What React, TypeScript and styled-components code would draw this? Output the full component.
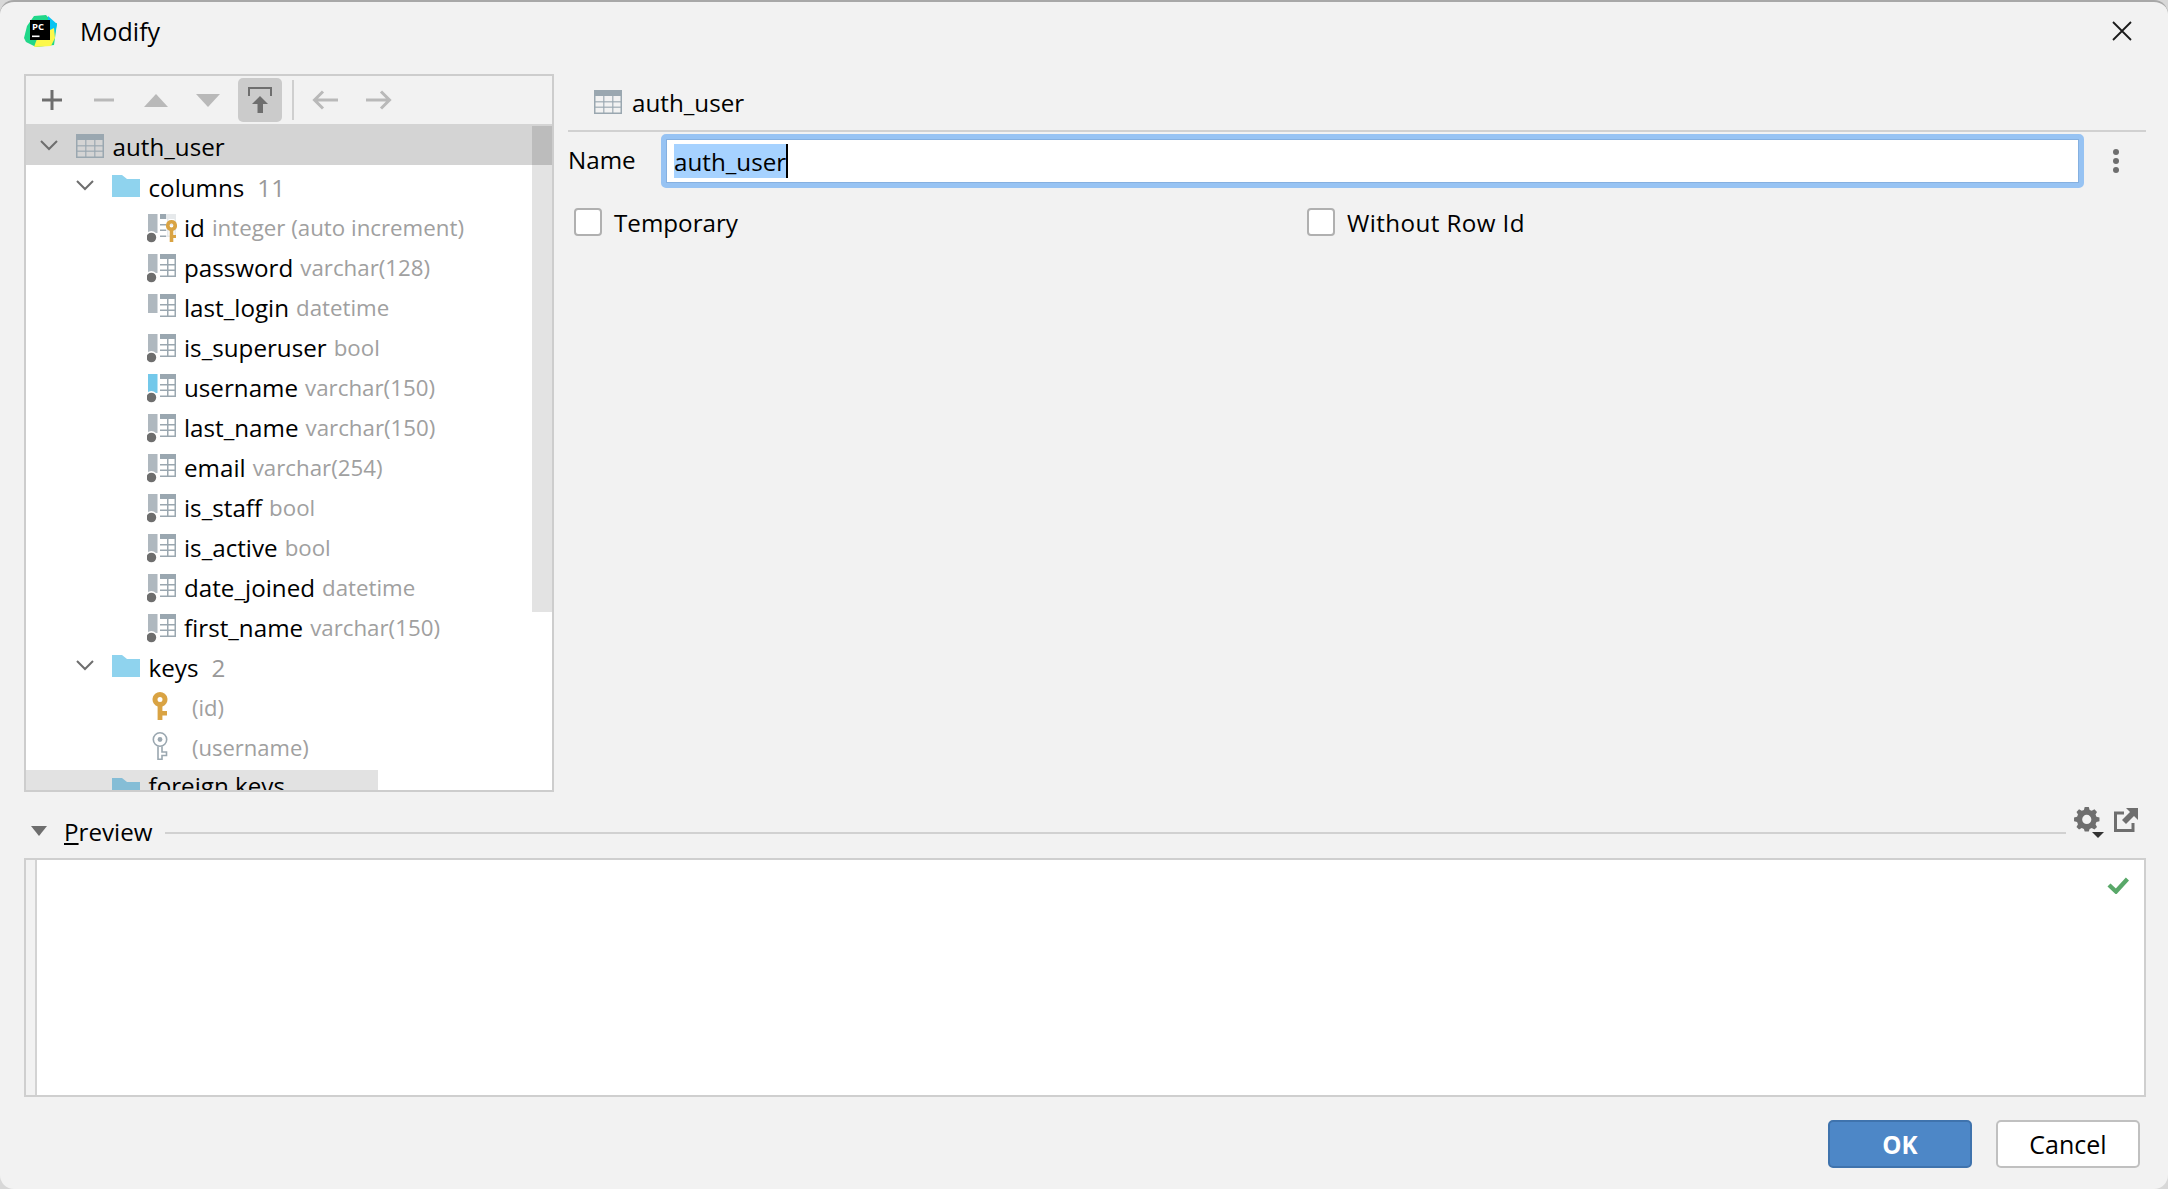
import styled, { createGlobalStyle } from 'styled-components';

const GlobalStyle = createGlobalStyle`
  html, body {
    margin: 0;
    padding: 0;
    background: #d8d8d8;
  }
  * {
    box-sizing: border-box;
  }
`;

const GREY = '#9aa7b0';

const ChevronIcon = () => (
  <ChevronSvg viewBox="0 0 20 20">
    <polyline points="2,5 10,13 18,5" fill="none" stroke="#6e6e6e" strokeWidth="2" />
  </ChevronSvg>
);

const TableIcon = () => (
  <svg width="28" height="24" viewBox="0 0 28 24">
    <g fill={GREY}>
      <rect x="0" y="0" width="28" height="6" />
      <rect x="0" y="6" width="1.5" height="18" />
      <rect x="26.5" y="6" width="1.5" height="18" />
      <rect x="0" y="22.5" width="28" height="1.5" />
      <rect x="0" y="11" width="28" height="1.5" opacity="0.75" />
      <rect x="0" y="16.5" width="28" height="1.5" opacity="0.75" />
      <rect x="9" y="6" width="1.5" height="17" opacity="0.75" />
      <rect x="18" y="6" width="1.5" height="17" opacity="0.75" />
    </g>
  </svg>
);

const KeyShape = ({ x, y, color }: { x: number; y: number; color: string }) => (
  <g transform={`translate(${x} ${y})`}>
    <path
      fillRule="evenodd"
      d="M5.5 0a5.5 5.5 0 0 1 1.8 10.7V15H10V18H7.3V22H3.7V10.7A5.5 5.5 0 0 1 5.5 0ZM5.5 3.6a1.9 1.9 0 1 0 0 3.8a1.9 1.9 0 1 0 0-3.8Z"
      fill={color}
    />
  </g>
);

const ColumnIcon = ({ accent, hasKey, noDot }: { accent?: boolean; hasKey?: boolean; noDot?: boolean }) => (
  <ColumnSvg width="30" height="30" viewBox="0 0 30 30">
    <rect x="1" y="1" width="9.5" height="19" fill={accent ? '#73c8ea' : '#afb8bf'} />
    <g fill={GREY}>
      <rect x="13" y="1" width="16" height="5" />
      <rect x="27.5" y="6" width="1.5" height="18" />
      <rect x="13" y="22.5" width="16" height="1.5" />
      <rect x="13" y="11" width="16" height="1.5" />
      <rect x="13" y="16.5" width="16" height="1.5" />
      <rect x="20" y="6" width="1.5" height="17" />
    </g>
    {hasKey && <rect x="19" y="0" width="11" height="28" fill="#fff" opacity="0.75" />}
    {hasKey && <KeyShape x={19} y={7} color="#d9a343" />}
    {!noDot && <circle cx="4.4" cy="24" r="6" fill="#fff" />}
    {!noDot && <circle cx="4.4" cy="24.5" r="4.8" fill="#6e6e6e" />}
  </ColumnSvg>
);

const FolderIcon = ({ color = '#8fd3ee' }: { color?: string }) => (
  <svg width="28" height="22" viewBox="0 0 28 22">
    <path d="M0 0H10L15 4H28V22H0Z" fill={color} />
  </svg>
);

const GoldKeyIcon = () => (
  <svg width="16" height="28" viewBox="0 0 16 28">
    <path
      fillRule="evenodd"
      d="M8 0a7.5 7.5 0 0 1 2.4 14.6V19H15V23.5H10.4V28H5.6V14.6A7.5 7.5 0 0 1 8 0ZM8 5a2.5 2.5 0 1 0 0 5a2.5 2.5 0 1 0 0-5Z"
      fill="#d9a343"
    />
  </svg>
);

const GreyKeyIcon = () => (
  <svg width="16" height="28" viewBox="0 0 16 28">
    <g fill="none" stroke={GREY} strokeWidth="1.6">
      <circle cx="8" cy="7.5" r="6.7" />
      <path d="M6 14.5V27.2H10V23.5H14.5V20H10V14.5" />
    </g>
    <circle cx="8" cy="7.5" r="2.4" fill={GREY} />
  </svg>
);

const PyCharmLogo = () => (
  <svg width="34" height="34" viewBox="0 0 34 34">
    <polygon points="3,12 10,2 22,1 30,10 33,9 31,24 30,31 12,33 2,28 0,24" fill="#21d789" />
    <polygon points="24,2 33,10 30,24 24,20" fill="#07c3f2" />
    <polygon points="10,33 14,22 30,14 31,24 27,32" fill="#fcf84a" />
    <rect x="6" y="6" width="20" height="20" fill="#000" />
    <text x="8" y="15.5" fill="#fff" fontFamily="Open Sans, sans-serif" fontWeight="700" fontSize="9.5">
      PC
    </text>
    <rect x="8" y="21.5" width="7.5" height="1.6" fill="#fff" />
  </svg>
);

const TOOL_COLOR = '#b9b9b9';

const PlusIcon = () => (
  <svg width="20" height="20" viewBox="0 0 20 20">
    <path d="M8.5 0H11.5V8.5H20V11.5H11.5V20H8.5V11.5H0V8.5H8.5Z" fill="#6e6e6e" />
  </svg>
);

const MinusIcon = () => (
  <svg width="20" height="20" viewBox="0 0 20 20">
    <rect x="0" y="8.5" width="20" height="3" fill={TOOL_COLOR} />
  </svg>
);

const UpIcon = () => (
  <svg width="24" height="13" viewBox="0 0 24 13">
    <polygon points="12,0 24,13 0,13" fill={TOOL_COLOR} />
  </svg>
);

const DownIcon = () => (
  <svg width="24" height="13" viewBox="0 0 24 13">
    <polygon points="0,0 24,0 12,13" fill={TOOL_COLOR} />
  </svg>
);

const PinIcon = () => (
  <svg width="24" height="26" viewBox="0 0 24 26">
    <path d="M1 9V1H23V9" fill="none" stroke="#6e6e6e" strokeWidth="2" />
    <polygon points="12,9 20,17 15,17 15,26 9.5,26 9.5,17 4,17" fill="#6e6e6e" />
  </svg>
);

const ArrowIcon = ({ flip }: { flip?: boolean }) => (
  <svg width="26" height="20" viewBox="0 0 26 20" style={flip ? { transform: 'scaleX(-1)' } : undefined}>
    <path d="M11 1.5L2.5 10L11 18.5M3 10H26" fill="none" stroke={TOOL_COLOR} strokeWidth="3" />
  </svg>
);

const GearIcon = () => (
  <svg width="32" height="32" viewBox="0 0 32 32">
    <path
      fillRule="evenodd"
      fill="#6e6e6e"
      d="M10 0H15L16 3.6L18.6 4.7L21.9 2.8L25 6L23.2 9.2L24.3 11.9L28 12.9V17.4L24.3 18.4L23.2 21.1L25 24.3L21.9 27.4L18.6 25.6L16 26.7L15 30H10L9 26.7L6.4 25.6L3.1 27.4L0 24.3L1.8 21.1L0.7 18.4L-3 17.4V12.9L0.7 11.9L1.8 9.2L0 6L3.1 2.8L6.4 4.7L9 3.6ZM12.5 9.5a5.6 5.6 0 1 0 0 11.2a5.6 5.6 0 1 0 0-11.2Z"
      transform="translate(3.5 0) scale(0.82)"
    />
    <polygon points="19,25 31,25 25,31" fill="#333" />
  </svg>
);

const ExportIcon = () => (
  <ExportSvg width="24" height="24" viewBox="0 0 24 24">
    <path d="M10 5H1.5V22.5H19V15" fill="none" stroke="#6e6e6e" strokeWidth="3" />
    <polygon points="12,0 24,0 24,12 20,8 12,16 8,12 16,4" fill="#6e6e6e" />
  </ExportSvg>
);

const CheckIcon = () => (
  <svg width="22" height="18" viewBox="0 0 22 18">
    <path d="M2 9L9 15.5L20.5 3" fill="none" stroke="#59a869" strokeWidth="4.4" />
  </svg>
);

const columns = [
  { name: 'id', type: 'integer (auto increment)', hasKey: true },
  { name: 'password', type: 'varchar(128)' },
  { name: 'last_login', type: 'datetime', noDot: true },
  { name: 'is_superuser', type: 'bool' },
  { name: 'username', type: 'varchar(150)', accent: true },
  { name: 'last_name', type: 'varchar(150)' },
  { name: 'email', type: 'varchar(254)' },
  { name: 'is_staff', type: 'bool' },
  { name: 'is_active', type: 'bool' },
  { name: 'date_joined', type: 'datetime' },
  { name: 'first_name', type: 'varchar(150)' },
];

const App = () => {
  return (
    <>
      <GlobalStyle />
      <Dialog>
        <TitleBar>
          <LogoWrap>
            <PyCharmLogo />
          </LogoWrap>
          <Title>Modify</Title>
          <CloseButton viewBox="0 0 20 20">
            <path d="M1 1L19 19M19 1L1 19" stroke="#1a1a1a" strokeWidth="1.8" />
          </CloseButton>
        </TitleBar>

        <Main>
          <TreePanel>
            <Toolbar>
              <ToolButton $width={52}><PlusIcon /></ToolButton>
              <ToolButton $width={52}><MinusIcon /></ToolButton>
              <ToolButton $width={52}><UpIcon /></ToolButton>
              <ToolButton $width={52}><DownIcon /></ToolButton>
              <PressedButton><PinIcon /></PressedButton>
              <ToolSeparator />
              <ToolButton $width={52}><ArrowIcon /></ToolButton>
              <ToolButton $width={56}><ArrowIcon flip /></ToolButton>
            </Toolbar>
            <Tree>
              <Row $indent={13} $height={41} $selected>
                <ChevronSlot><ChevronIcon /></ChevronSlot>
                <TableIcon />
                <NodeName>auth_user</NodeName>
              </Row>
              <Row $indent={49}>
                <ChevronSlot><ChevronIcon /></ChevronSlot>
                <FolderIcon />
                <NodeName>columns</NodeName>
                <Count>11</Count>
              </Row>
              {columns.map((column) => (
                <Row key={column.name} $indent={121}>
                  <ColumnIcon accent={column.accent} hasKey={column.hasKey} noDot={column.noDot} />
                  <ColumnName>{column.name}</ColumnName>
                  <TypeLabel>{column.type}</TypeLabel>
                </Row>
              ))}
              <Row $indent={49}>
                <ChevronSlot><ChevronIcon /></ChevronSlot>
                <FolderIcon />
                <NodeName>keys</NodeName>
                <Count>2</Count>
              </Row>
              <Row $indent={126}>
                <GoldKeyIcon />
                <KeyLabel>(id)</KeyLabel>
              </Row>
              <Row $indent={126}>
                <GreyKeyIcon />
                <KeyLabel>(username)</KeyLabel>
              </Row>
              <StickyRow>
                <StickyFolder>
                  <FolderIcon color="#85bdd6" />
                </StickyFolder>
                <StickyName>foreign keys</StickyName>
              </StickyRow>
              <ScrollThumb />
            </Tree>
          </TreePanel>

          <Editor>
            <EditorHeader>
              <TableIcon />
              <EditorTitle>auth_user</EditorTitle>
            </EditorHeader>
            <NameRow>
              <NameLabel>Name</NameLabel>
              <NameField>
                <Selection>auth_user</Selection>
                <Caret />
              </NameField>
              <DotsButton>
                <Dot />
                <Dot />
                <Dot />
              </DotsButton>
            </NameRow>
            <OptionRow>
              <Option>
                <CheckBox />
                <OptionLabel>Temporary</OptionLabel>
              </Option>
              <Option>
                <CheckBox />
                <OptionLabel $spacing={0.4}>Without Row Id</OptionLabel>
              </Option>
            </OptionRow>
          </Editor>
        </Main>

        <PreviewHeader>
          <PreviewArrow />
          <PreviewTitle><u>P</u>review</PreviewTitle>
          <PreviewLine />
          <GearWrap><GearIcon /></GearWrap>
          <ExportIcon />
        </PreviewHeader>
        <PreviewBox>
          <Gutter />
          <PreviewBody>
            <CheckIcon />
          </PreviewBody>
        </PreviewBox>

        <Footer>
          <OkButton>OK</OkButton>
          <CancelButton>Cancel</CancelButton>
        </Footer>
      </Dialog>
    </>
  );
};

export default App;

const FONT = `'Open Sans', 'Noto Sans', sans-serif`;

const Dialog = styled.div`
  width: 2168px;
  height: 1189px;
  display: flex;
  flex-direction: column;
  background: #f2f2f2;
  border-top: 2px solid #a8a8a8;
  border-radius: 14px;
  overflow: hidden;
  font-family: ${FONT};
  font-size: 24.2px;
  color: #000;
`;

const TitleBar = styled.div`
  height: 72px;
  flex: none;
  display: flex;
  align-items: center;
  padding: 0 36px 15px 24px;
`;

const LogoWrap = styled.div`
  width: 56px;
  height: 34px;
`;

const Title = styled.div`
  flex: 1;
  font-size: 25px;
`;

const CloseButton = styled.svg`
  width: 20px;
  height: 20px;
`;

const Main = styled.div`
  height: 718px;
  flex: none;
  display: flex;
  padding: 0 22px 0 24px;
`;

const TreePanel = styled.div`
  width: 530px;
  flex: none;
  display: flex;
  flex-direction: column;
  border: 2px solid #cdcdcd;
  background: #f2f2f2;
`;

const Toolbar = styled.div`
  height: 48px;
  flex: none;
  display: flex;
  align-items: center;
`;

const ToolButton = styled.div<{ $width: number }>`
  width: ${(props) => props.$width}px;
  height: 44px;
  flex: none;
  display: flex;
  align-items: center;
  justify-content: center;
`;

const PressedButton = styled(ToolButton).attrs({ $width: 44 })`
  background: #cbcbcb;
  border-radius: 5px;
  margin-left: 4px;
`;

const ToolSeparator = styled.div`
  width: 2px;
  height: 40px;
  margin: 0 5px 0 10px;
  background: #cfcfcf;
`;

const Tree = styled.div`
  flex: 1;
  position: relative;
  overflow: hidden;
  background: #fff;
`;

const Row = styled.div<{ $indent: number; $height?: number; $selected?: boolean }>`
  height: ${(props) => props.$height ?? 40}px;
  display: flex;
  align-items: center;
  padding-top: 2px;
  padding-left: ${(props) => props.$indent}px;
  background: ${(props) => (props.$selected ? '#d4d4d4' : 'transparent')};
  white-space: nowrap;
`;

const StickyRow = styled(Row).attrs({ $indent: 86 })`
  position: absolute;
  left: 0;
  bottom: 0;
  width: 352px;
  height: 20px;
  padding-top: 0;
  align-items: flex-start;
  background: #e2e2e2;
  overflow: hidden;
`;

const StickyFolder = styled.div`
  margin-top: 4px;
`;

const ChevronSlot = styled.div`
  width: 20px;
  height: 20px;
  margin-right: 17px;
`;

const ChevronSvg = styled.svg`
  display: block;
  width: 20px;
  height: 20px;
`;

const ColumnSvg = styled.svg`
  margin-top: 4px;
`;

const TreeText = styled.span`
  padding-top: 2px;
`;

const NodeName = styled(TreeText)`
  margin-left: 8.5px;
`;

const StickyName = styled(NodeName)`
  padding-top: 0;
  margin-top: -1px;
`;

const Count = styled(TreeText)`
  margin-left: 13px;
  color: #999;
`;

const ColumnName = styled(TreeText)`
  margin-left: 7px;
`;

const TypeLabel = styled(TreeText)`
  margin-left: 7px;
  font-size: 22.3px;
  color: #a0a0a0;
`;

const KeyLabel = styled(TreeText)`
  margin-left: 24px;
  font-size: 22px;
  color: #a0a0a0;
`;

const ScrollThumb = styled.div`
  position: absolute;
  top: 2px;
  right: 0;
  width: 20px;
  height: 486px;
  background: rgba(0, 0, 0, 0.11);
`;

const Editor = styled.div`
  flex: 1;
  display: flex;
  flex-direction: column;
  padding-left: 14px;
`;

const EditorHeader = styled.div`
  height: 58px;
  flex: none;
  display: flex;
  align-items: center;
  padding: 0 0 0 26px;
  border-bottom: 2px solid #d1d1d1;
`;

const EditorTitle = styled.span`
  margin-left: 10px;
`;

const NameRow = styled.div`
  display: flex;
  align-items: center;
  margin-top: 2px;
`;

const NameLabel = styled.label`
  width: 93px;
  flex: none;
  padding-bottom: 3px;
`;

const NameField = styled.div`
  width: 1423px;
  height: 54px;
  flex: none;
  display: flex;
  align-items: center;
  padding-left: 8px;
  background: #fff;
  border: 5px solid #97c3f3;
  border-radius: 5px;
  box-shadow: inset 0 0 0 1px #85b0e0;
`;

const Selection = styled.span`
  height: 34px;
  line-height: 36px;
  background: #a6d2ff;
`;

const Caret = styled.span`
  width: 2px;
  height: 34px;
  background: #000;
`;

const DotsButton = styled.div`
  flex: none;
  display: flex;
  flex-direction: column;
  gap: 3px;
  margin-left: 29px;
`;

const Dot = styled.span`
  width: 6px;
  height: 6px;
  border-radius: 50%;
  background: #6e6e6e;
`;

const OptionRow = styled.div`
  display: flex;
  margin-top: 20px;
  padding-left: 6px;
`;

const Option = styled.label`
  width: 733px;
  height: 28px;
  display: flex;
  align-items: center;
`;

const CheckBox = styled.span`
  width: 28px;
  height: 28px;
  flex: none;
  background: #fff;
  border: 2px solid #b0b0b0;
  border-radius: 4px;
`;

const OptionLabel = styled.span<{ $spacing?: number }>`
  margin-left: 12px;
  letter-spacing: ${(props) => props.$spacing ?? 0}px;
`;

const PreviewHeader = styled.div`
  height: 66px;
  flex: none;
  display: flex;
  align-items: flex-end;
  padding: 0 30px 10px 31px;
`;

const PreviewArrow = styled.div`
  width: 0;
  height: 0;
  margin-bottom: 12px;
  border-left: 8.5px solid transparent;
  border-right: 8.5px solid transparent;
  border-top: 10px solid #6e6e6e;
`;

const PreviewTitle = styled.span`
  margin-left: 17px;
  line-height: 32px;
`;

const PreviewLine = styled.div`
  flex: 1;
  height: 2px;
  margin: 0 7px 14px 12px;
  background: #d1d1d1;
`;

const GearWrap = styled.div`
  width: 41px;
  height: 32px;
  margin-bottom: 9px;
`;

const ExportSvg = styled.svg`
  margin-bottom: 16px;
`;

const PreviewBox = styled.div`
  height: 239px;
  flex: none;
  display: flex;
  margin: 0 22px 0 24px;
  border: 2px solid #cfcfcf;
  background: #fff;
`;

const Gutter = styled.div`
  width: 11px;
  flex: none;
  background: #f2f2f2;
  border-right: 2px solid #d3d3d3;
`;

const PreviewBody = styled.div`
  flex: 1;
  display: flex;
  justify-content: flex-end;
  padding: 16px 15px 0 0;
`;

const Footer = styled.div`
  flex: 1;
  display: flex;
  justify-content: flex-end;
  gap: 24px;
  padding: 23px 28px 0 0;
`;

const OkButton = styled.button`
  width: 144px;
  height: 48px;
  background: #4d87c7;
  border: 2px solid #3f73ad;
  border-radius: 5px;
  color: #fff;
  font-family: ${FONT};
  font-size: 24.2px;
  font-weight: 700;
`;

const CancelButton = styled.button`
  width: 144px;
  height: 48px;
  background: #fff;
  border: 2px solid #c0c0c0;
  border-radius: 5px;
  color: #000;
  font-family: ${FONT};
  font-size: 25px;
`;
